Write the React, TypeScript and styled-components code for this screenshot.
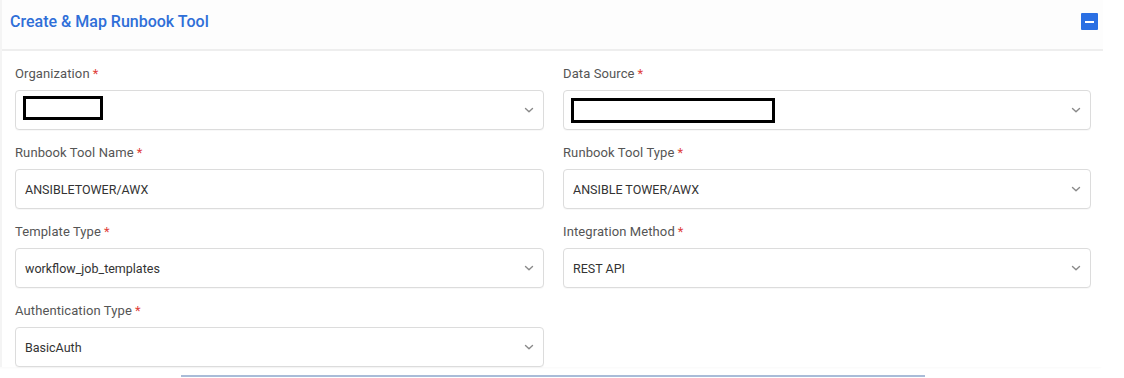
import React from "react";
import styled, { createGlobalStyle } from "styled-components";

const Global = createGlobalStyle`
  html, body { margin: 0; padding: 0; background: #ffffff; }
  body { font-family: Roboto, "Noto Sans", "Liberation Sans", Arial, sans-serif; }
  * { box-sizing: border-box; }
`;

const Page = styled.div`
  width: 1124px;
  height: 378px;
  overflow: hidden;
  background: #fff;
`;

const Panel = styled.section`
  width: 1103px;
  background: #fff;
  box-shadow: -2px 0 3px rgba(0, 0, 0, 0.05);
  border-left: 2px solid #f4f4f4;
`;

const Header = styled.header`
  height: 51px;
  display: flex;
  align-items: center;
  justify-content: space-between;
  padding: 0 5px 6px 8px;
  border-bottom: 2px solid #eeeeee;
  background: #fdfdfd;
`;

const Title = styled.h2`
  margin: 0;
  font-size: 16px;
  font-weight: 500;
  color: #2f6fd8;
  letter-spacing: 0;
`;

const CollapseButton = styled.button`
  width: 17px;
  height: 17px;
  padding: 0;
  border: none;
  border-radius: 1px;
  background: #2a6fe3;
  display: flex;
  align-items: center;
  justify-content: center;
  cursor: pointer;
  &::before {
    content: "";
    width: 9px;
    height: 2px;
    background: #fff;
  }
`;

const Form = styled.div`
  display: grid;
  grid-template-columns: 529px 528px;
  column-gap: 19px;
  row-gap: 14px;
  padding: 14px 12px 0 13px;
`;

const Field = styled.div`
  display: flex;
  flex-direction: column;
`;

const Label = styled.label`
  font-size: 13px;
  line-height: 17px;
  color: #555555;
  margin-bottom: 8px;
  letter-spacing: 0.1px;
`;

const Star = styled.span`
  color: #e0403a;
  margin-left: 3px;
`;

const Box = styled.div`
  height: 40px;
  border: 1px solid #dcdcdc;
  border-radius: 4px;
  background: #fff;
  display: flex;
  align-items: center;
  padding: 0 9px 0 9px;
  font-size: 12.5px;
  color: #333333;
  box-shadow: 0 1px 1px rgba(0, 0, 0, 0.03);
`;

const Value = styled.span`
  flex: 1;
`;

const Redacted = styled.span<{ $w: number; $h: number; $dy: number }>`
  display: block;
  width: ${(p) => p.$w}px;
  height: ${(p) => p.$h}px;
  border: 3.5px solid #000;
  background: #fff;
  margin-left: -2px;
  transform: translateY(${(p) => p.$dy}px);
`;

const Spacer = styled.span`
  flex: 1;
`;

const Chevron = styled.svg`
  width: 10px;
  height: 10px;
  flex: none;
`;

const BottomLine = styled.div`
  margin: 8px 0 0 181px;
  width: 744px;
  height: 2px;
  background: #a9bcd8;
`;

const Arrow = () => (
  <Chevron viewBox="0 0 10 10">
    <path d="M1.5 3.5 L5 6.8 L8.5 3.5" fill="none" stroke="#8a8a8a" strokeWidth="1.4" strokeLinecap="round" strokeLinejoin="round" />
  </Chevron>
);

type F = {
  label: string;
  value?: string;
  select: boolean;
  redact?: { w: number; h: number; dy: number };
};

const fields: F[] = [
  { label: "Organization", select: true, redact: { w: 80, h: 24, dy: -2 } },
  { label: "Data Source", select: true, redact: { w: 204, h: 25, dy: 0 } },
  { label: "Runbook Tool Name", value: "ANSIBLETOWER/AWX", select: false },
  { label: "Runbook Tool Type", value: "ANSIBLE TOWER/AWX", select: true },
  { label: "Template Type", value: "workflow_job_templates", select: true },
  { label: "Integration Method", value: "REST API", select: true },
  { label: "Authentication Type", value: "BasicAuth", select: true },
];

export default function App() {
  return (
    <Page>
      <Global />
      <Panel>
        <Header>
          <Title>Create &amp; Map Runbook Tool</Title>
          <CollapseButton aria-label="collapse" />
        </Header>
        <Form>
          {fields.map((f) => (
            <Field key={f.label}>
              <Label>
                {f.label}
                <Star>*</Star>
              </Label>
              <Box>
                {f.redact ? (
                  <>
                    <Redacted $w={f.redact.w} $h={f.redact.h} $dy={f.redact.dy} />
                    <Spacer />
                  </>
                ) : (
                  <Value>{f.value}</Value>
                )}
                {f.select && <Arrow />}
              </Box>
            </Field>
          ))}
        </Form>
      </Panel>
      <BottomLine />
    </Page>
  );
}
